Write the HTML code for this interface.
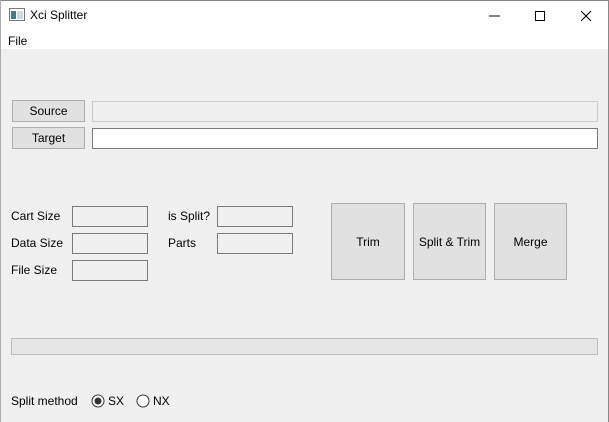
<!DOCTYPE html>
<html><head><style>
*{margin:0;padding:0;box-sizing:border-box}
body{width:609px;height:422px;overflow:hidden;background:#f0f0f0;font-family:"Liberation Sans",sans-serif;font-size:12px;color:#000;position:relative}
.a{position:absolute}
.btn{position:absolute;background:#e1e1e1;border:1px solid #adadad;display:flex;align-items:center;justify-content:center}
.tb{position:absolute;background:#fff;border:1px solid #7a7a7a}
.tbd{position:absolute;background:#f0f0f0;border:1px solid #cccccc}
.tbg{position:absolute;background:#f0f0f0;border:1px solid #7a7a7a}
.lbl{position:absolute}
</style></head><body>
<div class="a" style="left:0;top:0;width:609px;height:49px;background:#fff"></div>
<div class="a" style="left:0;top:0;width:609px;height:1px;background:#888"></div>
<div class="a" style="left:608px;top:0;width:1px;height:422px;background:#888"></div>
<div class="a" style="left:0;top:0;width:1px;height:422px;background:#aaa"></div>
<svg class="a" style="left:9px;top:8px" width="16" height="14"><rect x="0.5" y="0.5" width="15" height="12" fill="#fff" stroke="#777"/><rect x="2" y="3" width="5" height="8" fill="#4a7a8a"/><rect x="8" y="3" width="6" height="8" fill="#cfd8dc"/></svg>
<div class="lbl" style="left:30px;top:8px">Xci Splitter</div>
<svg class="a" style="left:486px;top:8px" width="110" height="16"><line x1="3" y1="8" x2="14" y2="8" stroke="#000"/><rect x="49.5" y="3.5" width="9" height="9" fill="none" stroke="#000"/><path d="M95 3 L105 13 M105 3 L95 13" stroke="#000"/></svg>
<div class="lbl" style="left:8px;top:34px">File</div>

<div class="btn" style="left:12px;top:100px;width:73px;height:22px">Source</div>
<div class="tbd" style="left:92px;top:101px;width:506px;height:21px"></div>
<div class="btn" style="left:12px;top:127px;width:73px;height:22px">Target</div>
<div class="tb" style="left:92px;top:128px;width:506px;height:21px"></div>

<div class="lbl" style="left:11px;top:209px">Cart Size</div>
<div class="tbg" style="left:72px;top:206px;width:76px;height:21px"></div>
<div class="lbl" style="left:11px;top:236px">Data Size</div>
<div class="tbg" style="left:72px;top:233px;width:76px;height:21px"></div>
<div class="lbl" style="left:11px;top:263px">File Size</div>
<div class="tbg" style="left:72px;top:260px;width:76px;height:21px"></div>
<div class="lbl" style="left:168px;top:209px">is Split?</div>
<div class="tbg" style="left:217px;top:206px;width:76px;height:21px"></div>
<div class="lbl" style="left:168px;top:236px">Parts</div>
<div class="tbg" style="left:217px;top:233px;width:76px;height:21px"></div>

<div class="btn" style="left:331px;top:203px;width:74px;height:77px">Trim</div>
<div class="btn" style="left:413px;top:203px;width:73px;height:77px">Split &amp; Trim</div>
<div class="btn" style="left:494px;top:203px;width:73px;height:77px">Merge</div>

<div class="a" style="left:11px;top:338px;width:587px;height:17px;background:#e6e6e6;border:1px solid #bcbcbc"></div>

<div class="lbl" style="left:11px;top:394px">Split method</div>
<svg class="a" style="left:91px;top:394px" width="14" height="14"><circle cx="7" cy="7" r="6" fill="#fff" stroke="#333"/><circle cx="7" cy="7" r="3.5" fill="#333"/></svg>
<div class="lbl" style="left:108px;top:394px">SX</div>
<svg class="a" style="left:136px;top:394px" width="14" height="14"><circle cx="7" cy="7" r="6" fill="#fff" stroke="#333"/></svg>
<div class="lbl" style="left:153px;top:394px">NX</div>
</body></html>
